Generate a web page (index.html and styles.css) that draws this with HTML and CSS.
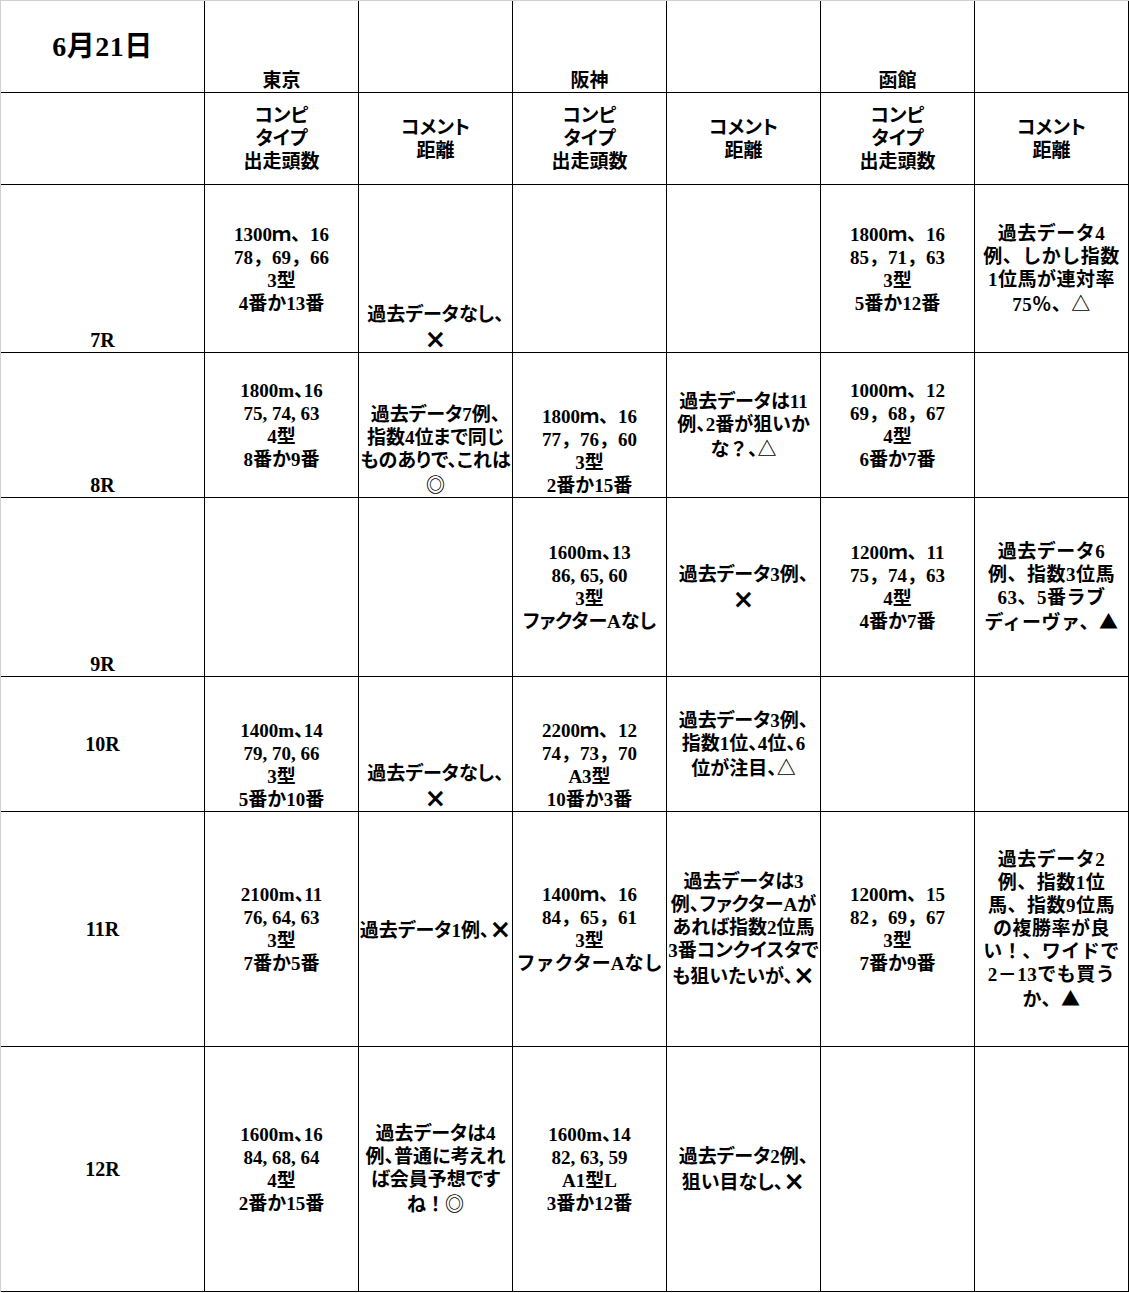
FILE: index.html
```html
<!DOCTYPE html>
<html lang="ja">
<head>
<meta charset="utf-8">
<title>6月21日</title>
<link rel="stylesheet" href="styles.css">
</head>
<body>
<div class="sheet">
  <!-- header row 1 -->
  <div class="cell"><div class="t date">6月21日</div></div>
  <div class="cell b"><div class="t p">東京</div></div>
  <div class="cell"></div>
  <div class="cell b"><div class="t p">阪神</div></div>
  <div class="cell"></div>
  <div class="cell b"><div class="t p">函館</div></div>
  <div class="cell"></div>

  <!-- header row 2 -->
  <div class="cell"></div>
  <div class="cell"><div class="t p">コンピ<br>タイプ<br>出走頭数</div></div>
  <div class="cell"><div class="t p">コメント<br>距離</div></div>
  <div class="cell"><div class="t p">コンピ<br>タイプ<br>出走頭数</div></div>
  <div class="cell"><div class="t p">コメント<br>距離</div></div>
  <div class="cell"><div class="t p">コンピ<br>タイプ<br>出走頭数</div></div>
  <div class="cell"><div class="t p">コメント<br>距離</div></div>

  <!-- 7R -->
  <div class="cell b"><div class="t lab">7R</div></div>
  <div class="cell"><div class="t">1300ｍ、16<br>78，69，66<br>3型<br>4番か13番</div></div>
  <div class="cell b"><div class="t p">過去データなし、<br><span class="x">×</span></div></div>
  <div class="cell"></div>
  <div class="cell"></div>
  <div class="cell"><div class="t">1800ｍ、16<br>85，71，63<br>3型<br>5番か12番</div></div>
  <div class="cell"><div class="t w">過去データ4<br>例、しかし指数<br>1位馬が連対率<br>75％、<span class="cj">△</span></div></div>

  <!-- 8R -->
  <div class="cell b"><div class="t lab">8R</div></div>
  <div class="cell"><div class="t p">1800m、16<br>75, 74, 63<br>4型<br>8番か9番</div></div>
  <div class="cell b"><div class="t p">過去データ7例、<br>指数4位まで同じ<br>ものありで、これは<br><span class="cj">◎</span></div></div>
  <div class="cell b"><div class="t">1800ｍ、16<br>77，76，60<br>3型<br>2番か15番</div></div>
  <div class="cell"><div class="t p">過去データは11<br>例、2番が狙いか<br>な<span class="cj">？</span>、<span class="cj">△</span></div></div>
  <div class="cell"><div class="t">1000ｍ、12<br>69，68，67<br>4型<br>6番か7番</div></div>
  <div class="cell"></div>

  <!-- 9R -->
  <div class="cell b"><div class="t lab">9R</div></div>
  <div class="cell"></div>
  <div class="cell"></div>
  <div class="cell"><div class="t p">1600m、13<br>86, 65, 60<br>3型<br>ファクターAなし</div></div>
  <div class="cell"><div class="t p">過去データ3例、<br><span class="x">×</span></div></div>
  <div class="cell"><div class="t">1200ｍ、11<br>75，74，63<br>4型<br>4番か7番</div></div>
  <div class="cell"><div class="t w">過去データ6<br>例、指数3位馬<br>63、5番ラブ<br>ディーヴァ、<span class="cj">▲</span></div></div>

  <!-- 10R -->
  <div class="cell"><div class="t lab">10R</div></div>
  <div class="cell b"><div class="t p">1400m、14<br>79, 70, 66<br>3型<br>5番か10番</div></div>
  <div class="cell b"><div class="t p">過去データなし、<br><span class="x">×</span></div></div>
  <div class="cell b"><div class="t">2200ｍ、12<br>74，73，70<br>A3型<br>10番か3番</div></div>
  <div class="cell"><div class="t p">過去データ3例、<br>指数1位、4位、6<br>位が注目、<span class="cj">△</span></div></div>
  <div class="cell"></div>
  <div class="cell"></div>

  <!-- 11R -->
  <div class="cell"><div class="t lab">11R</div></div>
  <div class="cell"><div class="t p">2100m、11<br>76, 64, 63<br>3型<br>7番か5番</div></div>
  <div class="cell"><div class="t p">過去データ1例、<span class="x">×</span></div></div>
  <div class="cell"><div class="t">1400ｍ、16<br>84，65，61<br>3型<br>ファクターAなし</div></div>
  <div class="cell"><div class="t p">過去データは3<br>例、ファクターAが<br>あれば指数2位馬<br>3番コンクイスタで<br>も狙いたいが、<span class="x">×</span></div></div>
  <div class="cell"><div class="t">1200ｍ、15<br>82，69，67<br>3型<br>7番か9番</div></div>
  <div class="cell"><div class="t w">過去データ2<br>例、指数1位<br>馬、指数9位馬<br>の複勝率が良<br>い！、ワイドで<br>2－13でも買う<br>か、<span class="cj">▲</span></div></div>

  <!-- 12R -->
  <div class="cell"><div class="t lab">12R</div></div>
  <div class="cell"><div class="t p">1600m、16<br>84, 68, 64<br>4型<br>2番か15番</div></div>
  <div class="cell"><div class="t p">過去データは4<br>例、普通に考えれ<br>ば会員予想です<br>ね<span class="cj">！</span><span class="cj">◎</span></div></div>
  <div class="cell"><div class="t p">1600m、14<br>82, 63, 59<br>A1型L<br>3番か12番</div></div>
  <div class="cell"><div class="t p">過去データ2例、<br>狙い目なし、<span class="x">×</span></div></div>
  <div class="cell"></div>
  <div class="cell"></div>
</div>
</body>
</html>
```

FILE: styles.css
```css
html, body {
  margin: 0;
  padding: 0;
  background: #ffffff;
}

body {
  font-family: "Liberation Serif", "Noto Sans CJK JP", serif;
  font-weight: bold;
  font-size: 19px;
  line-height: 23px;
  color: #000000;
}

.sheet {
  display: grid;
  grid-template-columns: 204px repeat(6, 154px);
  grid-template-rows: 92px 92px 168px 145px 179px 135px 235px 245px;
  width: max-content;
  border-top: 1px solid #d0d0d0;
  border-left: 1px solid #d0d0d0;
}

.cell {
  box-sizing: border-box;
  border-right: 1px solid #000000;
  border-bottom: 1px solid #000000;
  display: flex;
  flex-direction: column;
  justify-content: center;
  align-items: center;
  text-align: center;
  white-space: nowrap;
  overflow: hidden;
}

.cell.b {
  justify-content: flex-end;
}

.t {
  display: block;
}

.p {
  font-feature-settings: "palt" 1;
}

.w {
  letter-spacing: 0.5px;
}

.lab {
  font-size: 20px;
}

.date {
  font-size: 28px;
  line-height: 32px;
  letter-spacing: 0.5px;
}

.x {
  font-family: "DejaVu Sans", sans-serif;
  font-weight: bold;
  font-size: 26px;
  line-height: 1;
  vertical-align: -1px;
}

.cj {
  font-family: "Noto Sans CJK JP", sans-serif;
  font-feature-settings: normal;
}
```
